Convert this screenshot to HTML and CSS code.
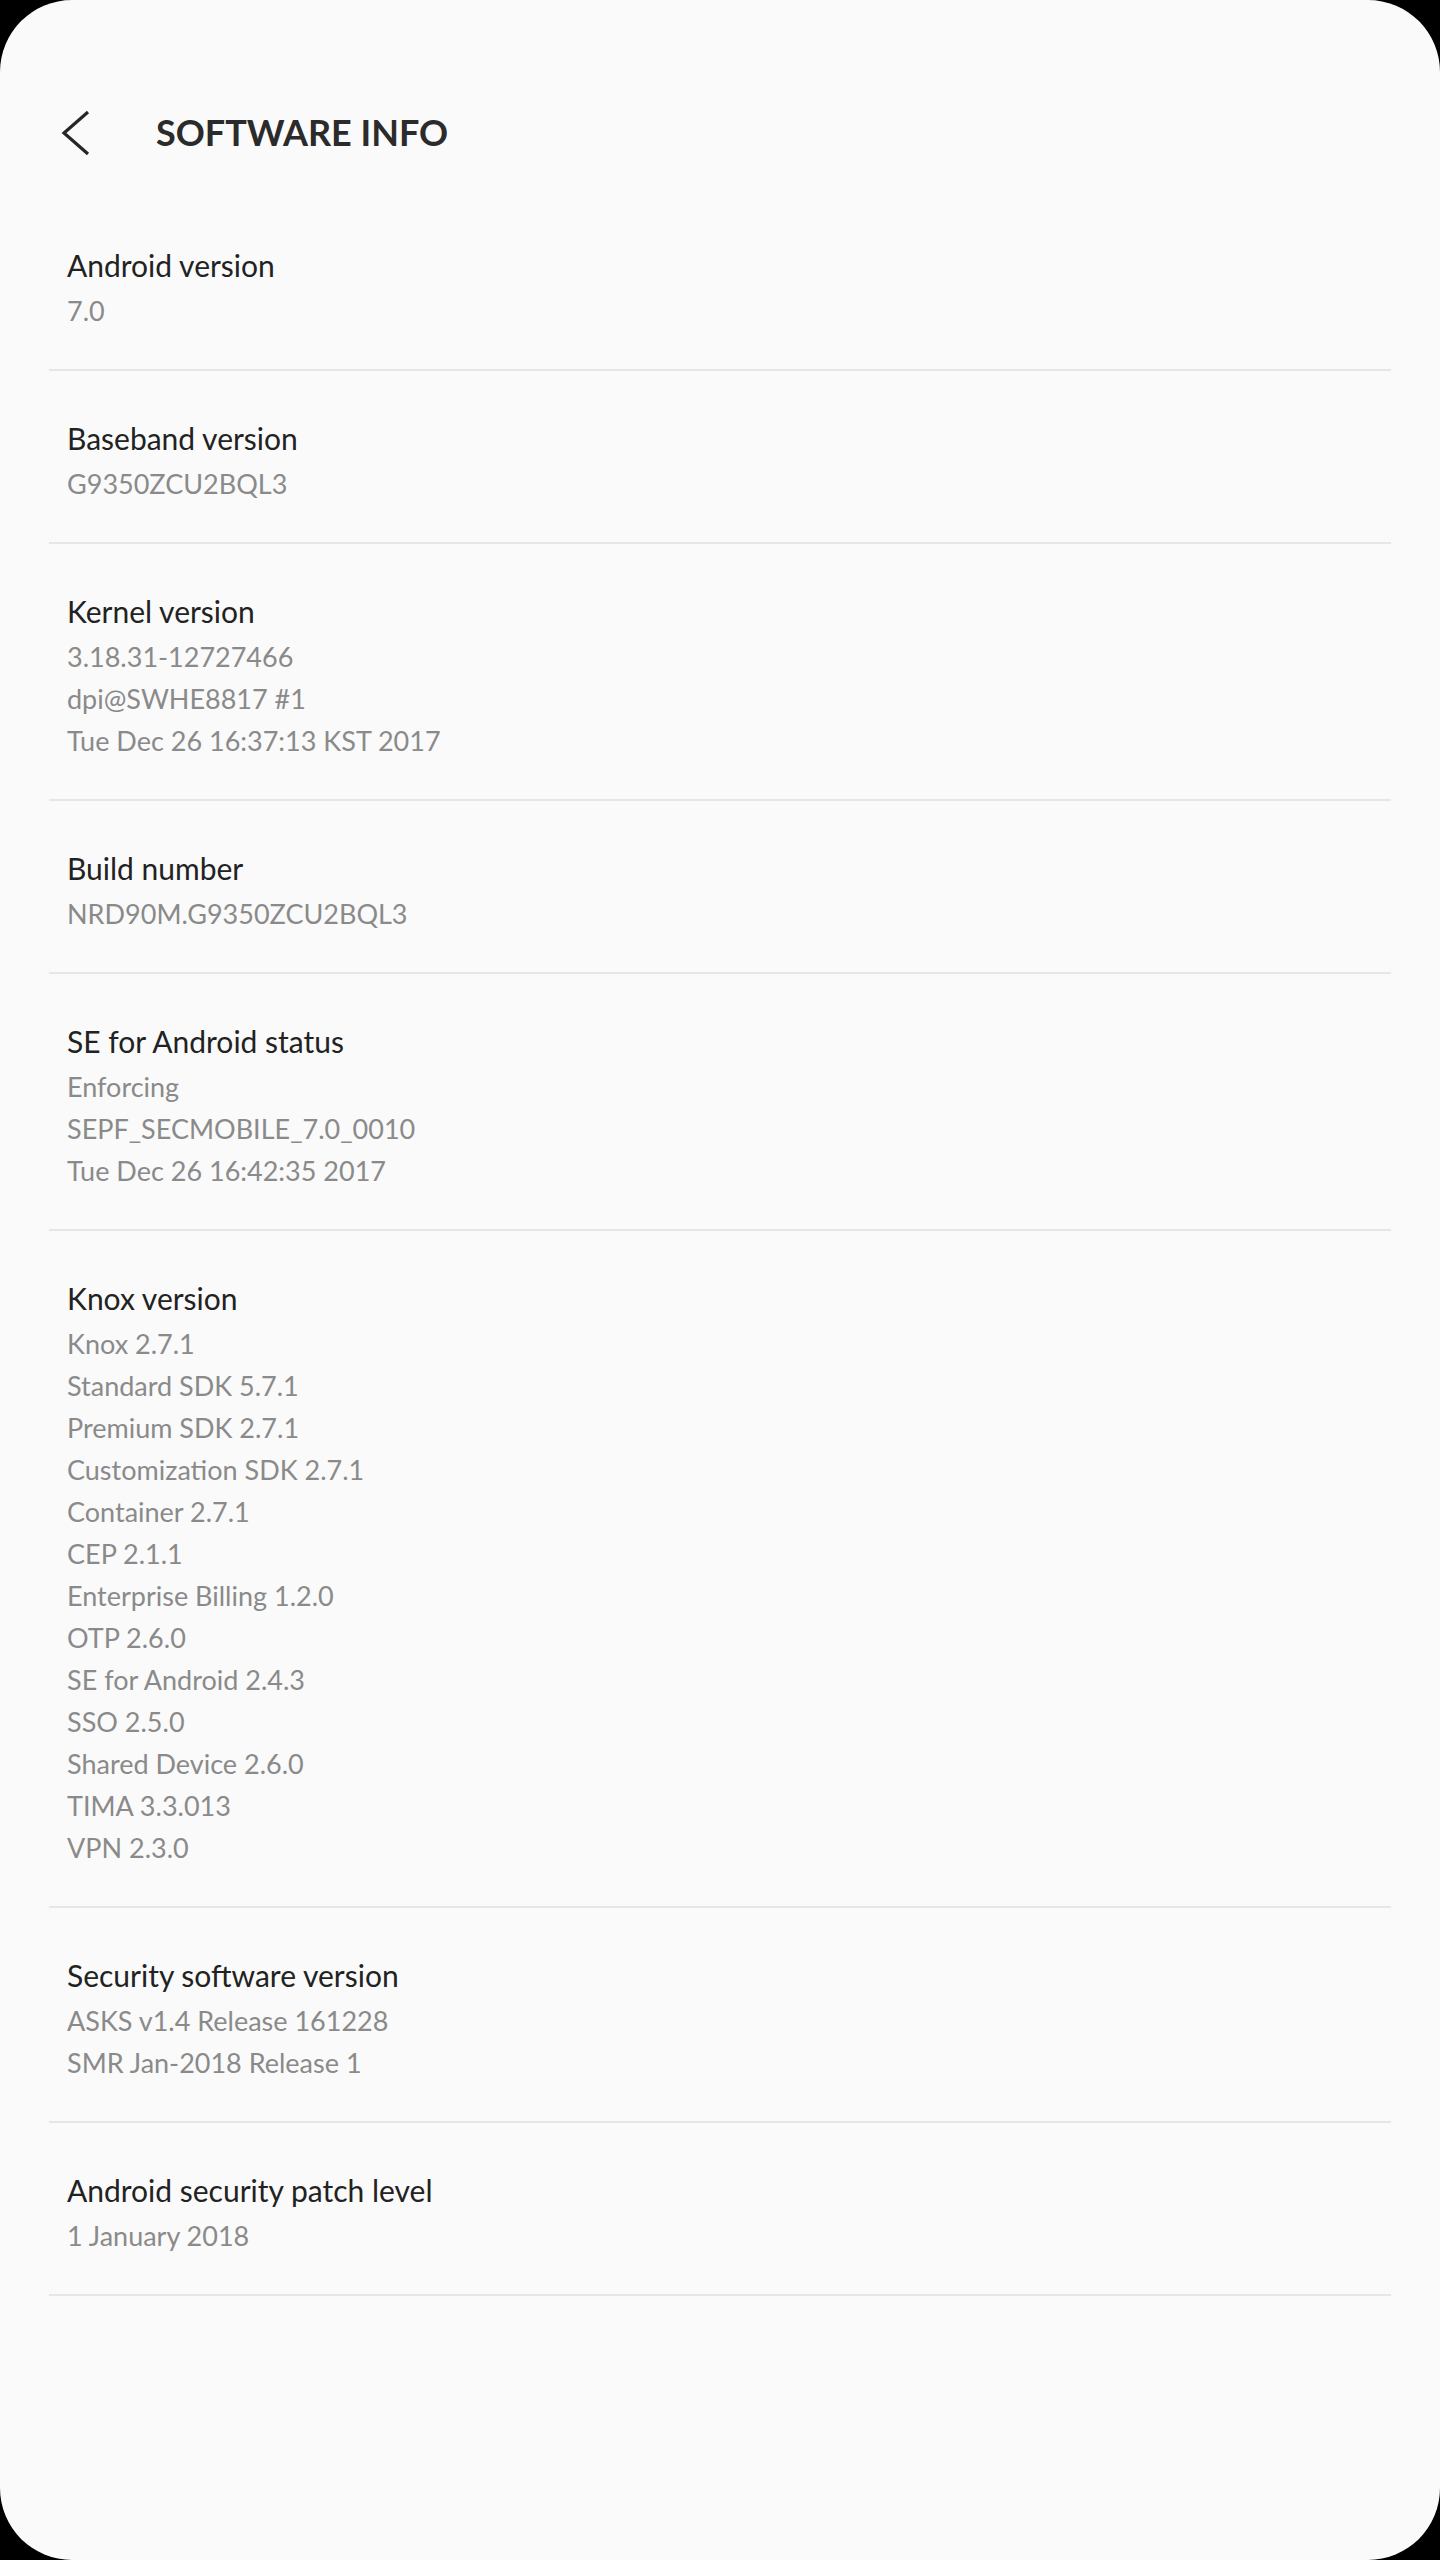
FILE: index.html
```html
<!DOCTYPE html>
<html lang="en">
<head>
<meta charset="utf-8">
<title>Software info</title>
<link rel="stylesheet" href="styles.css">
</head>
<body>
<div class="screen">
  <header class="appbar">
    <svg class="back" width="32" height="50" viewBox="0 0 32 50" aria-hidden="true">
      <polyline points="28,4 4,25 28,46" fill="none" stroke="#262626" stroke-width="3.2" stroke-linecap="butt" stroke-linejoin="miter"/>
    </svg>
    <h1 class="title">SOFTWARE INFO</h1>
  </header>
  <ul class="list">
    <li class="item">
      <div class="item-title">Android version</div>
      <div class="item-sub">
        <div>7.0</div>
      </div>
    </li>
    <li class="item">
      <div class="item-title">Baseband version</div>
      <div class="item-sub">
        <div>G9350ZCU2BQL3</div>
      </div>
    </li>
    <li class="item">
      <div class="item-title">Kernel version</div>
      <div class="item-sub">
        <div>3.18.31-12727466</div>
        <div>dpi@SWHE8817 #1</div>
        <div>Tue Dec 26 16:37:13 KST 2017</div>
      </div>
    </li>
    <li class="item">
      <div class="item-title">Build number</div>
      <div class="item-sub">
        <div>NRD90M.G9350ZCU2BQL3</div>
      </div>
    </li>
    <li class="item">
      <div class="item-title">SE for Android status</div>
      <div class="item-sub">
        <div>Enforcing</div>
        <div>SEPF_SECMOBILE_7.0_0010</div>
        <div>Tue Dec 26 16:42:35 2017</div>
      </div>
    </li>
    <li class="item">
      <div class="item-title">Knox version</div>
      <div class="item-sub">
        <div>Knox 2.7.1</div>
        <div>Standard SDK 5.7.1</div>
        <div>Premium SDK 2.7.1</div>
        <div>Customization SDK 2.7.1</div>
        <div>Container 2.7.1</div>
        <div>CEP 2.1.1</div>
        <div>Enterprise Billing 1.2.0</div>
        <div>OTP 2.6.0</div>
        <div>SE for Android 2.4.3</div>
        <div>SSO 2.5.0</div>
        <div>Shared Device 2.6.0</div>
        <div>TIMA 3.3.013</div>
        <div>VPN 2.3.0</div>
      </div>
    </li>
    <li class="item">
      <div class="item-title">Security software version</div>
      <div class="item-sub">
        <div>ASKS v1.4 Release 161228</div>
        <div>SMR Jan-2018 Release 1</div>
      </div>
    </li>
    <li class="item">
      <div class="item-title">Android security patch level</div>
      <div class="item-sub">
        <div>1 January 2018</div>
      </div>
    </li>
  </ul>
</div>
</body>
</html>
```

FILE: styles.css
```css
html, body {
  margin: 0;
  padding: 0;
  background: #000;
}

.screen {
  width: 1440px;
  height: 2560px;
  background: #fafafa;
  border-radius: 72px;
  overflow: hidden;
  font-family: "Lato", "Noto Sans", sans-serif;
}

.appbar {
  display: flex;
  align-items: flex-start;
  gap: 64px;
  padding: 109px 0 40px 60px;
}

.back {
  display: block;
  flex: none;
  margin-top: -1px;
}

.title {
  margin: 0;
  font-size: 36px;
  line-height: 46px;
  font-weight: 700;
  color: #2b2b2b;
  letter-spacing: 0;
}

.list {
  list-style: none;
  margin: 0 49px;
  padding: 0;
}

.item {
  padding: 47px 18px 37px;
  border-bottom: 2px solid #e6e6e6;
}

.item-title {
  font-size: 30px;
  line-height: 40px;
  color: #222;
  font-weight: 400;
}

.item-sub {
  margin-top: 5px;
  font-size: 27px;
  line-height: 42px;
  color: #8a8a8a;
}
```
